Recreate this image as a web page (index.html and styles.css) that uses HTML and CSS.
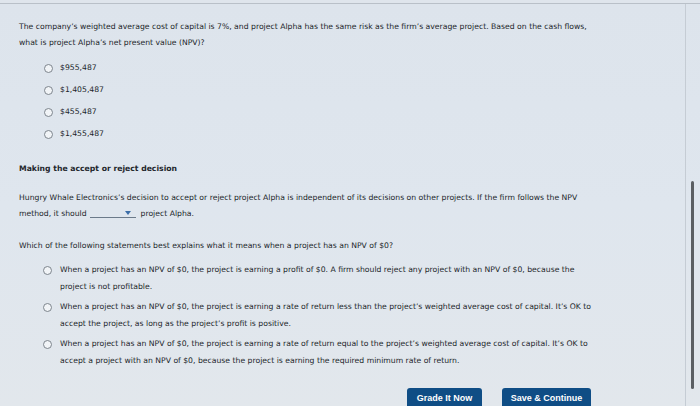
FILE: index.html
```html
<!DOCTYPE html>
<html>
<head>
<meta charset="utf-8">
<link rel="stylesheet" href="styles.css">
</head>
<body>
<div class="frame">
  <div class="content">
    <p class="q first">The company’s weighted average cost of capital is 7%, and project Alpha has the same risk as the firm’s average project. Based on the cash flows,<br>what is project Alpha’s net present value (NPV)?</p>
    <ul class="opts short">
      <li><span class="radio"></span>$955,487</li>
      <li><span class="radio"></span>$1,405,487</li>
      <li><span class="radio"></span>$455,487</li>
      <li><span class="radio"></span>$1,455,487</li>
    </ul>
    <h3 class="head">Making the accept or reject decision</h3>
    <p class="q para">Hungry Whale Electronics’s decision to accept or reject project Alpha is independent of its decisions on other projects. If the firm follows the NPV<br>method, it should <span class="select"><span class="tri"></span></span> project Alpha.</p>
    <p class="q which">Which of the following statements best explains what it means when a project has an NPV of $0?</p>
    <ul class="opts long">
      <li><span class="radio"></span><span>When a project has an NPV of $0, the project is earning a profit of $0. A firm should reject any project with an NPV of $0, because the<br>project is not profitable.</span></li>
      <li><span class="radio"></span><span>When a project has an NPV of $0, the project is earning a rate of return less than the project’s weighted average cost of capital. It’s OK to<br>accept the project, as long as the project’s profit is positive.</span></li>
      <li><span class="radio"></span><span>When a project has an NPV of $0, the project is earning a rate of return equal to the project’s weighted average cost of capital. It’s OK to<br>accept a project with an NPV of $0, because the project is earning the required minimum rate of return.</span></li>
    </ul>
    <div class="actions">
      <button class="btn grade">Grade It Now</button>
      <button class="btn save">Save &amp; Continue</button>
    </div>
  </div>
  <div class="scroll"><div class="thumb"></div></div>
</div>
</body>
</html>
```
FILE: styles.css
```css
html, body {
  margin: 0;
  padding: 0;
  width: 700px;
  height: 406px;
  overflow: hidden;
  background: #dfe5ec;
}
body {
  font-family: "DejaVu Sans", Verdana, sans-serif;
  color: #22262b;
}
.frame {
  display: flex;
  height: 406px;
  border-top: 1px solid #b9c0c8;
  margin-top: 3px;
  box-sizing: border-box;
  background: linear-gradient(180deg, #dde4ec 0%, #dfe6ee 50%, #e2e7ec 100%);
}
.content {
  width: 686px;
  border-right: 1px solid #c5ccd4;
  box-sizing: border-box;
  padding: 0 0 0 19px;
  font-size: 7.7px;
}
.scroll {
  width: 14px;
  position: relative;
}
.thumb {
  position: absolute;
  left: 5px;
  top: 177px;
  width: 3px;
  height: 208px;
  background: #5b5f63;
  border-radius: 2px;
}
p { margin: 0; }
.q { line-height: 16px; }
.first { padding-top: 15px; }
.opts {
  list-style: none;
  margin: 0;
  padding: 0;
}
.opts li {
  display: flex;
  align-items: flex-start;
}
.short { margin-top: 9px; padding-left: 25px; }
.short li { height: 22px; line-height: 16px; }
.radio {
  width: 7px;
  height: 7px;
  border: 1px solid #7d858d;
  border-radius: 50%;
  background: #f1f4f7;
  flex: none;
  margin-top: 3.5px;
  margin-right: 7px;
}
.head {
  margin: 13px 0 0;
  font-size: 7.7px;
  font-weight: bold;
  line-height: 16px;
  color: #23272c;
}
.para { margin-top: 13px; }
.select {
  display: inline-block;
  width: 46px;
  height: 8px;
  border-bottom: 1px solid #6b7a8a;
  vertical-align: -2px;
  margin: 0 2px 0 1px;
  position: relative;
}
.tri {
  position: absolute;
  right: 5px;
  top: 2px;
  width: 0;
  height: 0;
  border-left: 3.5px solid transparent;
  border-right: 3.5px solid transparent;
  border-top: 4px solid #3c6ea8;
}
.which { margin-top: 16px; }
.long { margin-top: 8px; padding-left: 24px; }
.long li { line-height: 16.5px; margin-bottom: 4px; }
.long .radio { margin-top: 4px; margin-right: 8px; }
.actions {
  display: flex;
  gap: 20px;
  padding-left: 388px;
  margin-top: 19px;
}
.btn {
  height: 24px;
  border: none;
  border-radius: 3px;
  background: #0f4d85;
  color: #fff;
  font-family: "Liberation Sans", Arial, sans-serif;
  font-weight: bold;
  font-size: 9px;
  padding: 0 0 4px;
  white-space: nowrap;
  text-align: center;
}
.grade { width: 75px; }
.save { width: 89px; }
```
